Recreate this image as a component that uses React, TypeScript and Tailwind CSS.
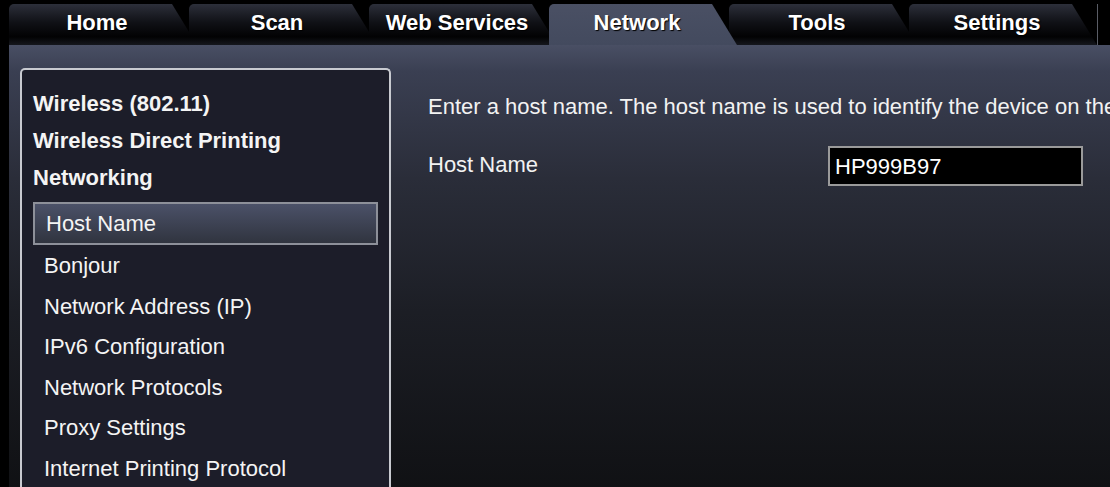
import React from "react";

const tabs = ["Home", "Scan", "Web Services", "Network", "Tools", "Settings"];
const active = "Network";

const groups = ["Wireless (802.11)", "Wireless Direct Printing", "Networking"];
const items = [
  "Bonjour",
  "Network Address (IP)",
  "IPv6 Configuration",
  "Network Protocols",
  "Proxy Settings",
  "Internet Printing Protocol",
];

export default function App() {
  return (
    <div
      className="w-[1110px] h-[487px] overflow-hidden bg-black pl-[9px] pt-[4px] flex flex-col"
      style={{ fontFamily: '"Liberation Sans", Arial, sans-serif' }}
    >
      {/* Tab bar */}
      <div className="flex h-[41px] shrink-0 items-stretch">
        {tabs.map((t) => {
          const isActive = t === active;
          return (
            <div
              key={t}
              className={
                "relative w-[188px] mr-[-8px] shrink-0 rounded-tl-[5px] [clip-path:polygon(0_0,163px_0,188px_100%,0_100%)] " +
                (isActive
                  ? "z-10 bg-[linear-gradient(to_bottom,#4a5064,#434a5e)]"
                  : "bg-[linear-gradient(to_bottom,#2c2f3a_0%,#101116_45%,#020203_80%,#15171d_100%)]")
              }
            >
              <div className="w-[180px] h-full flex items-center justify-center pr-[4px] pb-[5px] text-white text-[22px] font-bold [text-shadow:1px_1px_1px_#000]">
                {t}
              </div>
            </div>
          );
        })}
        <div className="w-[1px] ml-[8px] bg-[#5a5d66]" />
      </div>

      {/* Content */}
      <div className="flex-1 bg-[linear-gradient(to_bottom,#494f64_0%,#3a3f52_6%,#2a2d39_30%,#1c1e25_60%,#101114_100%)] flex pl-[11px] pt-[23px]">
        {/* Sidebar */}
        <div className="w-[371px] shrink-0 border-2 border-b-0 border-[#c8cad0] rounded-t-[5px] bg-[#1c1d29] pt-[15px] px-[11px] text-[#f4f4f4] text-[22px]">
          {groups.map((g) => (
            <div key={g} className="font-bold leading-[37px] whitespace-nowrap">
              {g}
            </div>
          ))}
          <div className="mt-[6px] h-[43px] border-2 border-[#8d9099] bg-[linear-gradient(to_bottom,#4b5168,#30343f)] flex items-center pl-[11px]">
            Host Name
          </div>
          <div className="pt-[1px]">
            {items.map((i) => (
              <div key={i} className="leading-[40.6px] pl-[11px] whitespace-nowrap">
                {i}
              </div>
            ))}
          </div>
        </div>

        {/* Main */}
        <div className="flex-1 min-w-0 pl-[37px] pt-[25px] text-[#f2f2f2] text-[22px] overflow-hidden">
          <div className="whitespace-nowrap leading-[28px]">
            Enter a host name. The host name is used to identify the device on the network.
          </div>
          <div className="flex items-center mt-[25px]">
            <div className="w-[400px] shrink-0 pb-[4px]">Host Name</div>
            <div className="w-[255px] h-[40px] border-2 border-[#9a9a9a] bg-black flex items-center pl-[5px] text-white">
              HP999B97
            </div>
          </div>
        </div>
      </div>
    </div>
  );
}
